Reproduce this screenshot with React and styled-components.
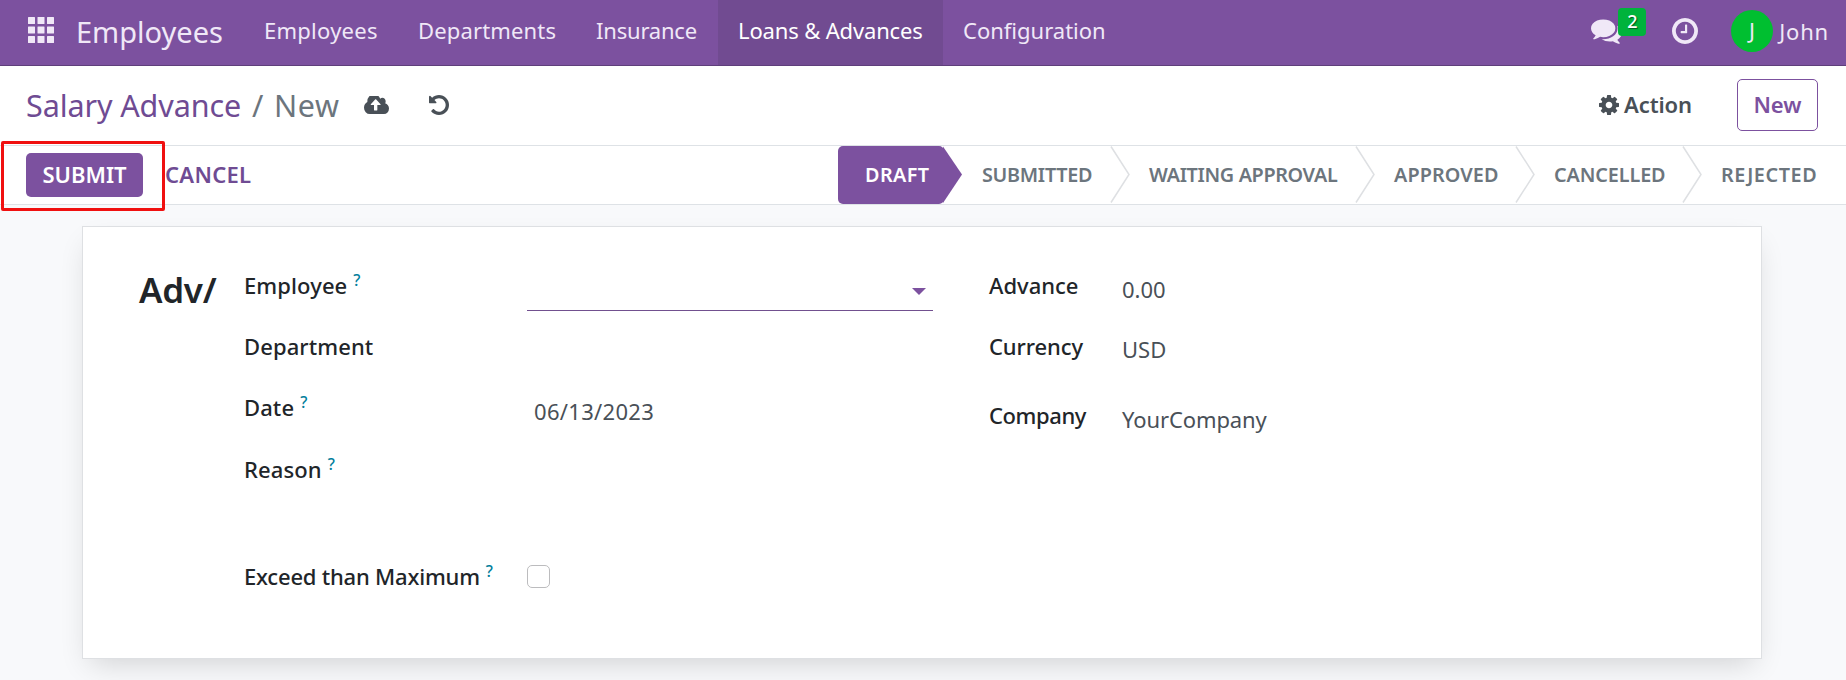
import React, { useState } from "react";
import styled, { createGlobalStyle } from "styled-components";

const GlobalStyle = createGlobalStyle`
  * {
    box-sizing: border-box;
  }
  body {
    margin: 0;
    background-color: #f8f9fb;
    font-family: "Noto Sans", "Open Sans", sans-serif;
    font-size: 22px;
    line-height: 30px;
    color: #212529;
  }
  button {
    font-family: inherit;
    cursor: pointer;
  }
`;

const menus = [
  { name: "Employees", width: 154, ls: 0.25 },
  { name: "Departments", width: 178, ls: 0.15 },
  { name: "Insurance", width: 142, ls: -0.2 },
  { name: "Loans & Advances", width: 225, ls: -0.15 },
  { name: "Configuration", width: 186, ls: 0 },
];

const steps = [
  { name: "DRAFT", width: 106, ls: 0.4 },
  { name: "SUBMITTED", width: 167, ls: -0.3 },
  { name: "WAITING APPROVAL", width: 245, ls: -0.35 },
  { name: "APPROVED", width: 160, ls: 0.1 },
  { name: "CANCELLED", width: 167, ls: -0.1 },
  { name: "REJECTED", width: 163, ls: 0.6 },
];

function AppsIcon() {
  const pos = [0, 9.5, 19];
  return (
    <svg width="26" height="26" viewBox="0 0 26 26" fill="currentColor">
      {pos.map((y) =>
        pos.map((x) => (
          <rect key={`${x}-${y}`} x={x} y={y} width="7" height="7" rx="0.5" />
        ))
      )}
    </svg>
  );
}

function CommentsIcon() {
  return (
    <svg width="31" height="31" viewBox="0 0 1792 1792" fill="currentColor">
      <path d="M1408 768q0 139-94 257t-256.5 186.5-353.5 68.5q-86 0-176-16-124 88-278 128-36 9-86 16h-3q-11 0-20.5-8t-11.5-21q-1-3-1-6.5t.5-6.5 2-6l2.5-5 3.5-5.5 4-5 4.5-5 4-4.5q5-6 23-25t26-29.5 22.5-29 25-38.5 20.5-44q-124-72-195-177t-71-224q0-139 94-257t256.5-186.5 353.5-68.5 353.5 68.5 256.5 186.5 94 257zm384 256q0 120-71 224.5t-195 176.5q10 24 20.5 44t25 38.5 22.5 29 26 29.5 23 25q1 1 4 4.5t4.5 5 4 5 3.5 5.5l2.5 5 2 6 .5 6.5-1 6.5q-3 14-13 22t-22 7q-50-7-86-16-154-40-278-128-90 16-176 16-271 0-472-132 58 4 88 4 161 0 309-45t264-129q125-92 192-212t67-254q0-77-23-152 129 71 204 178t75 230z" />
    </svg>
  );
}

function ClockIcon() {
  return (
    <svg width="26" height="26" viewBox="128 128 1536 1536" fill="currentColor">
      <path d="M1024 544v448q0 14-9 23t-23 9h-320q-14 0-23-9t-9-23v-64q0-14 9-23t23-9h224v-352q0-14 9-23t23-9h64q14 0 23 9t9 23zm416 352q0-148-73-273t-198-198-273-73-273 73-198 198-73 273 73 273 198 198 273 73 273-73 198-198 73-273zm224 0q0 209-103 385.5t-279.5 279.5-385.5 103-385.5-103-279.5-279.5-103-385.5 103-385.5 279.5-279.5 385.5-103 385.5 103 279.5 279.5 103 385.5z" />
    </svg>
  );
}

function CogIcon() {
  return (
    <svg width="20" height="20" viewBox="128 128 1536 1536" fill="currentColor">
      <path d="M1152 896q0-106-75-181t-181-75-181 75-75 181 75 181 181 75 181-75 75-181zm512-109v222q0 12-8 23t-20 13l-185 28q-19 54-39 91 35 50 107 138 10 12 10 25t-9 23q-27 37-99 108t-94 71q-12 0-26-9l-138-108q-44 23-91 38-16 136-29 186-7 28-36 28h-222q-14 0-24.5-8.5t-11.5-21.5l-28-184q-49-16-90-37l-141 107q-10 9-25 9-14 0-25-11-126-114-165-168-7-10-7-23 0-12 8-23 15-21 51-66.5t54-70.5q-27-50-41-99l-183-27q-13-2-21-12.5t-8-23.5v-222q0-12 8-23t19-13l186-28q14-46 39-92-40-57-107-138-10-12-10-24 0-10 9-23 26-36 98.5-107.5t94.5-71.5q13 0 26 10l138 107q44-23 91-38 16-136 29-186 7-28 36-28h222q14 0 24.5 8.5t11.5 21.5l28 184q49 16 90 37l142-107q9-9 24-9 13 0 25 10 129 119 165 170 7 8 7 22 0 12-8 23-15 21-51 66.5t-54 70.5q26 50 41 98l183 28q13 2 21 12.5t8 23.5z" />
    </svg>
  );
}

function UndoIcon() {
  return (
    <svg width="20" height="20" viewBox="128 128 1536 1536" fill="currentColor">
      <path d="M1664 896q0 156-61 298t-164 245-245 164-298 61q-172 0-327-72.5t-264-204.5q-7-10-6.5-22.5t8.5-20.5l137-138q10-9 25-9 16 2 23 12 73 95 179 147t225 52q104 0 198.5-40.5t163.5-109.5 109.5-163.5 40.5-198.5-40.5-198.5-109.5-163.5-163.5-109.5-198.5-40.5q-98 0-188 35.5t-160 101.5l137 138q31 30 14 69-17 40-59 40h-448q-26 0-45-19t-19-45v-448q0-42 40-59 39-17 69 14l130 129q107-101 244.5-156.5t284.5-55.5q156 0 298 61t245 164 164 245 61 298z" />
    </svg>
  );
}

function CloudIcon() {
  return (
    <svg
      width="25"
      height="18"
      viewBox="-64 256 1920 1280"
      preserveAspectRatio="none"
      fill="currentColor"
    >
      <path d="M1216 864q0-14-9-23l-352-352q-9-9-23-9t-23 9l-351 351q-10 12-10 24 0 14 9 23t23 9h224v352q0 13 9.5 22.5t22.5 9.5h192q13 0 22.5-9.5t9.5-22.5v-352h224q13 0 22.5-9.5t9.5-22.5zm640 288q0 159-112.5 271.5t-271.5 112.5h-1088q-185 0-316.5-131.5t-131.5-316.5q0-130 70-240t188-165q-2-30-2-43 0-212 150-362t362-150q156 0 285.5 87t188.5 231q71-62 166-62 106 0 181 75t75 181q0 76-41 138 130 31 213.5 135.5t83.5 238.5z" />
    </svg>
  );
}

function App() {
  const [menu, setMenu] = useState("Loans & Advances");
  const [exceed, setExceed] = useState(false);

  return (
    <Page>
      <GlobalStyle />
      {/* navbar */}
      <Navbar>
        <AppsButton>
          <AppsIcon />
        </AppsButton>
        <Brand>Employees</Brand>
        {menus.map((m) => (
          <MenuItem
            key={m.name}
            $width={m.width}
            $ls={m.ls}
            $active={m.name === menu}
            onClick={() => setMenu(m.name)}
          >
            {m.name}
          </MenuItem>
        ))}
        <Systray>
          <Messages>
            <CommentsIcon />
            <Badge>2</Badge>
          </Messages>
          <ClockIcon />
          <User>
            <Avatar>J</Avatar>
            John
          </User>
        </Systray>
      </Navbar>

      {/* breadcrumb */}
      <ControlPanel>
        <Breadcrumb>
          <Crumb>Salary Advance</Crumb>
          <Slash>/</Slash>
          <Current>New</Current>
        </Breadcrumb>
        <FormIcons>
          <CloudIcon />
          <UndoIcon />
        </FormIcons>
        <Action>
          <CogIcon />
          <span>Action</span>
        </Action>
        <NewButton>New</NewButton>
      </ControlPanel>

      {/* statusbar */}
      <StatusBar>
        <SubmitButton>SUBMIT</SubmitButton>
        <CancelButton>CANCEL</CancelButton>
        <Highlight />
        <Steps>
          {steps.map((s, i) => (
            <Step key={s.name} $width={s.width} $ls={s.ls} $current={i === 0}>
              {s.name}
              {i < steps.length - 1 && (
                <Arrow width="21" height="58" viewBox="0 0 21 58">
                  {i === 0 ? (
                    <path d="M0 0.5L19 28.5L0 57z" fill="#7c519f" />
                  ) : (
                    <path
                      d="M1 0.5L19 28.5L1 56.5"
                      fill="none"
                      stroke="#dee0e3"
                      strokeWidth="1.5"
                    />
                  )}
                </Arrow>
              )}
            </Step>
          ))}
        </Steps>
      </StatusBar>

      <Sheet>
        <Title>Adv/</Title>
        <Group $width={745}>
          <Row $height={61}>
            <Label $width={283}>
              Employee<Help>?</Help>
            </Label>
            <Select>
              <Caret />
            </Select>
          </Row>
          <Row $height={61}>
            <Label $width={283} $ls={0.1}>
              Department
            </Label>
          </Row>
          <Row $height={62}>
            <Label $width={283}>
              Date<Help>?</Help>
            </Label>
            <Value $left={7} $ls={0.3}>
              06/13/2023
            </Value>
          </Row>
          <Row $height={107}>
            <Label $width={283}>
              Reason<Help>?</Help>
            </Label>
          </Row>
          <Row $height={30}>
            <Label $width={283} $ls={-0.2}>
              Exceed than Maximum<Help>?</Help>
            </Label>
            <Checkbox
              type="checkbox"
              checked={exceed}
              onChange={() => setExceed(!exceed)}
            />
          </Row>
        </Group>
        <Group $width={600}>
          <Row $height={61}>
            <Label $width={133} $ls={0}>
              Advance
            </Label>
            <Value>0.00</Value>
          </Row>
          <Row $height={69}>
            <Label $width={133} $ls={-0.1}>
              Currency
            </Label>
            <Value $top={3}>USD</Value>
          </Row>
          <Row $height={30}>
            <Label $width={133} $ls={-0.4}>
              Company
            </Label>
            <Value $ls={-0.1}>YourCompany</Value>
          </Row>
        </Group>
      </Sheet>
    </Page>
  );
}

const Page = styled.div`
  min-height: 100vh;
  background-color: #f8f9fb;
`;

const Navbar = styled.header`
  display: flex;
  align-items: center;
  height: 66px;
  padding-right: 17px;
  background-color: #7c519f;
  border-bottom: 1px solid #5f3f7b;
  color: #f0e8f7;
`;

const AppsButton = styled.a`
  display: flex;
  width: 76px;
  padding: 0 0 5px 28px;
`;

const Brand = styled.div`
  width: 168px;
  padding-bottom: 2px;
  font-size: 29px;
  line-height: 40px;
`;

const MenuItem = styled.a`
  display: flex;
  align-items: center;
  height: 65px;
  width: ${(p) => p.$width}px;
  padding: 0 0 5px 20px;
  letter-spacing: ${(p) => p.$ls}px;
  white-space: nowrap;
  cursor: pointer;
  background-color: ${(p) => (p.$active ? "#714b91" : "transparent")};
  color: ${(p) => (p.$active ? "#ffffff" : "inherit")};
`;

const Systray = styled.div`
  display: flex;
  align-items: center;
  margin-left: auto;
  padding-bottom: 4px;
`;

const Messages = styled.div`
  position: relative;
  display: flex;
  margin-right: 50px;
`;

const Badge = styled.span`
  position: absolute;
  top: -7px;
  left: 27px;
  width: 28px;
  height: 28px;
  border-radius: 4px;
  background-color: #00b33c;
  color: #ffffff;
  font-size: 18px;
  font-weight: 500;
  line-height: 27px;
  text-align: center;
  text-shadow: 1px 1px 1px rgba(0, 0, 0, 0.5);
`;

const User = styled.div`
  display: flex;
  align-items: center;
  margin-left: 33px;
  letter-spacing: 0.8px;
`;

const Avatar = styled.span`
  width: 42px;
  height: 42px;
  margin-right: 6px;
  border-radius: 50%;
  background-color: #00bf30;
  line-height: 41px;
  text-align: center;
`;

const ControlPanel = styled.div`
  display: flex;
  align-items: center;
  height: 80px;
  padding: 0 28px 2px 26px;
  background-color: #ffffff;
  border-bottom: 1px solid #dee2e6;
`;

const Breadcrumb = styled.div`
  display: flex;
  width: 338px;
  font-size: 30.5px;
  line-height: 42px;
  white-space: nowrap;
`;

const Crumb = styled.a`
  width: 226px;
  letter-spacing: -0.1px;
  color: #6f4b93;
`;

const Slash = styled.span`
  width: 22px;
  color: #6c757d;
`;

const Current = styled.span`
  letter-spacing: 0.6px;
  color: #6c757d;
`;

const FormIcons = styled.div`
  display: flex;
  align-items: center;
  gap: 40px;
  color: #495057;
`;

const Action = styled.div`
  display: flex;
  align-items: center;
  gap: 5px;
  margin-left: auto;
  font-weight: 600;
  color: #495057;

  span {
    padding-bottom: 2px;
    letter-spacing: -0.1px;
  }
`;

const NewButton = styled.button`
  width: 81px;
  height: 52px;
  margin-left: 45px;
  padding: 0 0 2px;
  border: 1px solid #7c519f;
  border-radius: 5px;
  background-color: #ffffff;
  color: #7c519f;
  font-size: 22px;
  font-weight: 600;
`;

const StatusBar = styled.div`
  position: relative;
  display: flex;
  align-items: center;
  height: 59px;
  padding-left: 26px;
  background-color: #ffffff;
  border-bottom: 1px solid #dee2e6;
`;

const SubmitButton = styled.button`
  width: 117px;
  height: 44px;
  padding: 0 0 3px;
  border: none;
  border-radius: 5px;
  background-color: #7c519f;
  color: #ffffff;
  font-size: 22px;
  font-weight: 600;
`;

const CancelButton = styled.button`
  margin-left: 22px;
  padding: 0 0 3px;
  border: none;
  background: none;
  color: #6f4b93;
  font-size: 22px;
  font-weight: 600;
  letter-spacing: 0.3px;
`;

/* red frame over the submit button */
const Highlight = styled.div`
  position: absolute;
  top: -5px;
  left: 1px;
  width: 164px;
  height: 70px;
  border: 3px solid #f01010;
  border-radius: 2px;
`;

const Steps = styled.div`
  display: flex;
  margin-left: auto;
`;

const Step = styled.div`
  position: relative;
  display: flex;
  align-items: center;
  width: ${(p) => p.$width}px;
  height: 58px;
  padding: 0 0 1px ${(p) => (p.$current ? 27 : 38)}px;
  border-radius: ${(p) => (p.$current ? "5px" : "0")};
  background-color: ${(p) => (p.$current ? "#7c519f" : "#ffffff")};
  color: ${(p) => (p.$current ? "#ffffff" : "#6c757d")};
  font-size: 19.8px;
  font-weight: 600;
  letter-spacing: ${(p) => p.$ls}px;
  white-space: nowrap;
`;

const Arrow = styled.svg`
  position: absolute;
  top: 0;
  left: calc(100% - 1px);
  z-index: 1;
`;

const Sheet = styled.main`
  display: flex;
  width: 1680px;
  height: 433px;
  margin-left: 82px;
  padding: 38px 0 0 56px;
  background-color: #ffffff;
  border: 1px solid #dee0e3;
  box-shadow: 0 12px 28px -8px rgba(0, 0, 0, 0.16);

  ${StatusBar} + & {
    margin-top: 21px;
  }
`;

const Title = styled.h1`
  width: 105px;
  margin: 0;
  padding-top: 1px;
  font-size: 35px;
  font-weight: 600;
  line-height: 48px;
  letter-spacing: -0.3px;
`;

const Group = styled.div`
  width: ${(p) => p.$width}px;
  padding-top: 5px;
`;

const Row = styled.div`
  display: flex;
  height: ${(p) => p.$height}px;
`;

const Label = styled.label`
  width: ${(p) => p.$width}px;
  font-weight: 550;
  letter-spacing: ${(p) => p.$ls ?? 0.1}px;
  white-space: nowrap;
`;

const Help = styled.sup`
  margin-left: 6px;
  font-size: 16px;
  line-height: 0;
  color: #017e9c;
`;

const Value = styled.span`
  padding-top: ${(p) => p.$top ?? 4}px;
  padding-left: ${(p) => p.$left || 0}px;
  letter-spacing: ${(p) => p.$ls || 0}px;
  color: #495057;
`;

const Select = styled.div`
  display: flex;
  justify-content: flex-end;
  width: 406px;
  height: 41px;
  padding: 18px 7px 0 0;
  border-bottom: 1px solid #71508f;
`;

const Caret = styled.span`
  width: 0;
  height: 0;
  border-left: 7px solid transparent;
  border-right: 7px solid transparent;
  border-top: 7px solid #7c519f;
`;

const Checkbox = styled.input`
  appearance: none;
  width: 23px;
  height: 23px;
  margin: 4px 0 0;
  border: 1px solid #bcbcbe;
  border-radius: 5px;
  background-color: ${(p) => (p.checked ? "#7c519f" : "#ffffff")};
`;

export default App;
